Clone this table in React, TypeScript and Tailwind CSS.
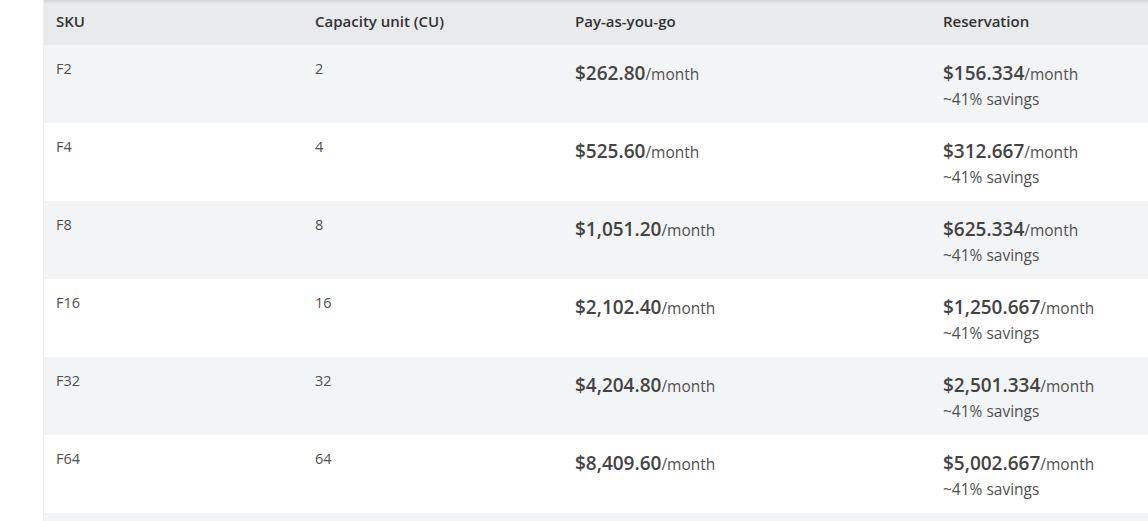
const rows = [
  { sku: "F2", cu: "2", payg: "$262.80", res: "$156.334" },
  { sku: "F4", cu: "4", payg: "$525.60", res: "$312.667" },
  { sku: "F8", cu: "8", payg: "$1,051.20", res: "$625.334" },
  { sku: "F16", cu: "16", payg: "$2,102.40", res: "$1,250.667" },
  { sku: "F32", cu: "32", payg: "$4,204.80", res: "$2,501.334" },
  { sku: "F64", cu: "64", payg: "$8,409.60", res: "$5,002.667" },
];

const cols = "grid grid-cols-[259px_260px_368px_1fr]";

export default function App() {
  return (
    <div className="h-[521px] w-[1148px] overflow-hidden bg-white font-['Open_Sans','Noto_Sans',sans-serif] flex">
      <div className="w-[44px] shrink-0 border-r border-[#ededed]" />
      <div className="flex-1 relative">
        {/* top shadow */}
        <div className="absolute inset-x-0 top-0 h-[4px] bg-gradient-to-b from-[#d4d5d8] to-transparent" />

        <div className={`${cols} h-[45px] bg-[#e9eaec] text-[15px] leading-5 font-semibold text-[#333]`}>
          <div className="pl-3 pt-[11px]">SKU</div>
          <div className="pl-3 pt-[11px]">Capacity unit (CU)</div>
          <div className="pl-3 pt-[11px]">Pay-as-you-go</div>
          <div className="pl-3 pt-[11px]">Reservation</div>
        </div>

        {rows.map((r, i) => (
          <div
            key={r.sku}
            className={`${cols} h-[78px] text-[#505050] ${i % 2 === 0 ? "bg-[#f3f4f6]" : "bg-white"}`}
          >
            <div className="pl-3 pt-[14px] text-[14.5px] leading-5">{r.sku}</div>
            <div className="pl-3 pt-[14px] text-[14.5px] leading-5">{r.cu}</div>
            <div className="pl-3 pt-[15px] leading-[26px]">
              <span className="text-[19px] font-semibold text-[#444]">{r.payg}</span>
              <span className="text-[15.5px]">/month</span>
            </div>
            <div className="pl-3 pt-[15px]">
              <div className="leading-[26px]">
                <span className="text-[19px] font-semibold text-[#444]">{r.res}</span>
                <span className="text-[15.5px]">/month</span>
              </div>
              <div className="text-[15.5px] leading-6">~41% savings</div>
            </div>
          </div>
        ))}
        <div className="h-[20px] bg-[#f3f4f6]" />
      </div>
    </div>
  );
}
